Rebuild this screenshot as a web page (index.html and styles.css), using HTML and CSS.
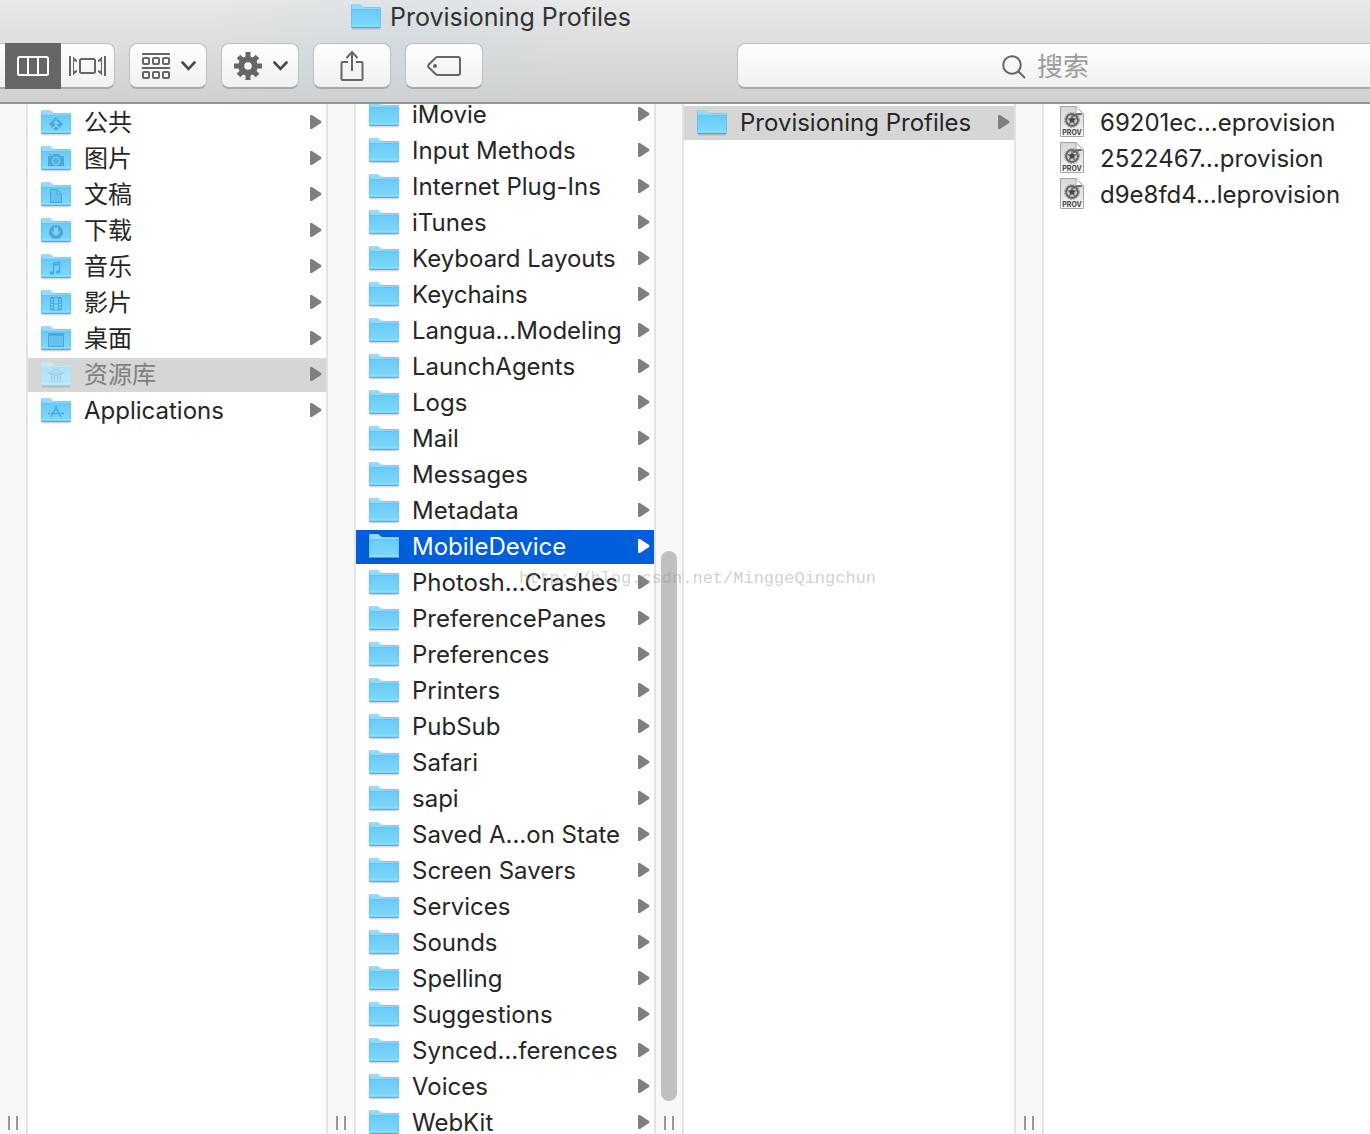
FILE: index.html
```html
<!DOCTYPE html>
<html lang="zh-CN">
<head>
  <meta charset="UTF-8" />
  <meta name="viewport" content="width=device-width, initial-scale=1.0" />
  <title>Provisioning Profiles</title>
  <link rel="stylesheet" href="styles.css">
</head>
<body>
  <svg class="sprite" width="0" height="0" aria-hidden="true">
    <defs>
      <linearGradient id="folderFill" x1="0" y1="0" x2="0" y2="1">
        <stop offset="0" stop-color="#68cbf8" />
        <stop offset="1" stop-color="#81d8fc" />
      </linearGradient>
      <linearGradient id="paperFill" x1="0" y1="0" x2="0" y2="1">
        <stop offset="0" stop-color="#d6d6d6" />
        <stop offset="1" stop-color="#f6f6f6" />
      </linearGradient>
    </defs>
    <symbol id="folder" viewBox="0 0 30 26">
      <path d="M1 24.5h28" stroke="#000" stroke-opacity=".15" stroke-width="2" />
      <path d="M0 1.2Q0 0 1.2 0H8.5Q9.5 0 10.2 .8L12 2.6Q12.6 3 13.5 3H29Q30 3 30 4V12H0Z" fill="#94dbfb" />
      <path d="M0 5H30V23Q30 24 29 24H1Q0 24 0 23Z" fill="url(#folderFill)" />
      <path d="M.5 1V23M29.5 4V23" stroke="#5fb9e4" stroke-opacity=".6" />
      <path d="M0 5.5H30M13 3.5H29.5" stroke="#5fbfea" stroke-opacity=".6" />
      <path d="M0 21.5H30" stroke="#a1e3fd" stroke-opacity=".5" />
      <path d="M.5 23.5H29.5" stroke="#56a9cf" />
    </symbol>
    <symbol id="prov" viewBox="0 0 24 31">
      <path d="M.5 .5H16L23.5 8V30.5H.5Z" fill="url(#paperFill)" stroke="#a5a5a5" />
      <path d="M16 .5V8H23.5Z" fill="#fff" stroke="#aaa" />
      <circle cx="12" cy="14" r="6" fill="#ccc" stroke="#666" stroke-width="2" />
      <circle cx="12" cy="14" r="7.5" fill="none" stroke="#888" stroke-dasharray="1.5 1.5" />
      <path d="M12 14V8.5M12 14L17.2 12.3M12 14L15.2 18.5M12 14L8.8 18.5M12 14L6.8 12.3" stroke="#777" stroke-width="1.5" />
      <circle cx="12" cy="14" r="2.5" fill="#444" />
      <path d="M13 10.5Q16 7.5 21.500 8" fill="none" stroke="#666" stroke-width="2" />
      <text x="12" y="28.5" text-anchor="middle" class="prov-text">PROV</text>
    </symbol>
    <symbol id="chevron" viewBox="0 0 15 10">
      <path d="M1.5 1.5L7.5 7.8L13.5 1.5" fill="none" stroke="#484848" stroke-width="2.6" stroke-linecap="round" />
    </symbol>
  </svg>

  <div class="window">
    <header class="toolbar">
      <h1 class="title"><svg class="icon"><use href="#folder" /></svg>Provisioning Profiles</h1>
      <div class="tools">
        <div class="segments">
          <button class="segment active" aria-label="分栏">
            <svg width="32" height="20" viewBox="0 0 32 20" fill="none" stroke="#fff" stroke-width="2"><rect x="1" y="1" width="30" height="18" rx="1.5" /><path d="M11 1V19M21 1V19" /></svg>
          </button>
          <button class="segment" aria-label="Cover Flow">
            <svg width="37" height="20" viewBox="0 0 37 20" fill="none" stroke="#666" stroke-width="2"><path d="M1 0V20M36 0V20" /><path d="M4.500 1V19M32.500 1V19" stroke-width="1" /><path d="M4 1L8 4V6L5 5V15L8 14V16L4 19ZM33 1L29 4V6L32 5V15L29 14V16L33 19Z" fill="#666" stroke="none" /><rect x="11" y="3" width="15" height="14" rx="1.5" /></svg>
          </button>
        </div>
        <button class="tool menu" aria-label="排列">
          <svg width="28" height="26" viewBox="0 0 28 26" fill="none" stroke="#666" stroke-width="2"><path d="M0 1H28M0 15H28" /><rect x="1" y="5" width="6" height="6" rx="1" /><rect x="11" y="5" width="6" height="6" rx="1" /><rect x="21" y="5" width="6" height="6" rx="1" /><rect x="1" y="19" width="6" height="6" rx="1" /><rect x="11" y="19" width="6" height="6" rx="1" /><rect x="21" y="19" width="6" height="6" rx="1" /></svg>
          <svg width="15" height="10"><use href="#chevron" /></svg>
        </button>
        <button class="tool menu" aria-label="操作">
          <svg width="28" height="28" viewBox="-14 -14 28 28"><g stroke="#666" stroke-width="5"><path d="M0-14V-7M0 14V7M-14 0H-7M14 0H7" /><path d="M-9.5-9.5L-5-5M9.5 9.5L5 5M-9.5 9.5L-5 5M9.5-9.5L5-5" /></g><circle r="6.8" fill="none" stroke="#666" stroke-width="6" /></svg>
          <svg width="15" height="10"><use href="#chevron" /></svg>
        </button>
        <button class="tool" aria-label="共享">
          <svg width="24" height="32" viewBox="0 0 24 32" fill="none" stroke="#666" stroke-width="2"><path d="M8 12H2.5Q1.5 12 1.5 13V29Q1.5 30 2.5 30H21.5Q22.5 30 22.5 29V13Q22.5 12 21.5 12H16M12 21V2M6.5 8L12 2L17.5 8" /></svg>
        </button>
        <button class="tool" aria-label="编辑标记">
          <svg width="34" height="20" viewBox="0 0 34 20"><path d="M10.5 1H31Q33 1 33 3V17Q33 19 31 19H10.5Q9.5 19 8.5 18L1.8 11.5Q.5 10 1.8 8.5L8.5 2Q9.5 1 10.5 1Z" fill="none" stroke="#666" stroke-width="2" /><circle cx="8" cy="10" r="2" fill="#666" /></svg>
        </button>
        <label class="search">
          <svg width="24" height="24" viewBox="0 0 24 24" fill="none" stroke="#666" stroke-width="2"><circle cx="10" cy="10" r="8.8" /><path d="M16 16L23 23" /></svg>
          <input type="text" placeholder="搜索" aria-label="搜索">
        </label>
      </div>
    </header>

    <main class="browser">
      <div class="divider first"><span class="grip"></span></div>

      <ul class="column">
        <li><a class="item dir" href="#"><svg class="icon" viewBox="0 0 30 26"><use href="#folder" /><path d="M15 7L22 14L15 21L8 14Z" fill="#4ba7da" /><path d="M14 10h2M12.5 13L15 12L18 13.5M15 12V15L12.5 18M15 15L17.5 18" fill="none" stroke="#7dd3fa" stroke-width="1.4" /></svg><span>公共</span></a></li>
        <li><a class="item dir" href="#"><svg class="icon" viewBox="0 0 30 26"><use href="#folder" /><path d="M7 10H11L12.5 8H17.5L19 10H23V20H7Z" fill="#4ba7da" /><path d="M8 8.5H10.5" stroke="#4ba7da" /><circle cx="15" cy="15" r="3.8" fill="#55b1e0" stroke="#83d6fb" /></svg><span>图片</span></a></li>
        <li><a class="item dir" href="#"><svg class="icon" viewBox="0 0 30 26"><use href="#folder" /><path d="M9.5 7.5H16L20.5 12V20.5H9.5ZM16 7.5V12H20.5" fill="#67c2ed" stroke="#4ba7da" /></svg><span>文稿</span></a></li>
        <li><a class="item dir" href="#"><svg class="icon" viewBox="0 0 30 26"><use href="#folder" /><circle cx="15" cy="14" r="7" fill="#4ba7da" /><path d="M13 9.5H17V13.5H20L15 18.5L10 13.5H13Z" fill="#7dd3fa" /></svg><span>下载</span></a></li>
        <li><a class="item dir" href="#"><svg class="icon" viewBox="0 0 30 26"><use href="#folder" /><path d="M12.5 18.5V9.5L18.5 8V17.5M12.5 11.5L18.5 10" fill="none" stroke="#4ba7da" stroke-width="1.4" /><ellipse cx="11" cy="19" rx="2.2" ry="1.7" fill="#4ba7da" /><ellipse cx="17" cy="18" rx="2.2" ry="1.7" fill="#4ba7da" /></svg><span>音乐</span></a></li>
        <li><a class="item dir" href="#"><svg class="icon" viewBox="0 0 30 26"><use href="#folder" /><path d="M9.5 7.5H20.5V20H9.5ZM12.5 7.5V20M17.5 7.5V20M12.5 14H17.5" fill="none" stroke="#4ba7da" /><path d="M11 8V20M19 8V20" stroke="#4ba7da" stroke-width="2" stroke-dasharray="1 1.5" /></svg><span>影片</span></a></li>
        <li><a class="item dir" href="#"><svg class="icon" viewBox="0 0 30 26"><use href="#folder" /><path d="M7.5 7.5H22.5V20.5H7.5Z" fill="#67c2ed" stroke="#4ba7da" /><path d="M7 8.5H23" stroke="#4ba7da" stroke-width="2.5" /></svg><span>桌面</span></a></li>
        <li><a class="item dir selected dimmed" href="#"><svg class="icon" viewBox="0 0 30 26"><use href="#folder" /><path d="M8 11L15 7L22 11ZM9 12.5H21M8 20H22" fill="none" stroke="#3f9fd3" stroke-width="1.2" /><path d="M10.5 13V19M13.5 13V19M16.5 13V19M19.5 13V19" stroke="#3f9fd3" stroke-width="1.6" /><path d="M0 0H10L13 3H30V24H0Z" fill="#eef6fa" fill-opacity=".55" /></svg><span>资源库</span></a></li>
        <li><a class="item dir" href="#"><svg class="icon" viewBox="0 0 30 26"><use href="#folder" /><path d="M14 8L20 19M16 8L10 19" stroke="#4ba7da" stroke-width="1.4" /><path d="M7 15.5H23" stroke="#4ba7da" stroke-width="1.4" stroke-dasharray="2 1 9 1 3" /></svg><span>Applications</span></a></li>
      </ul>

      <div class="divider"><span class="grip"></span></div>

      <ul class="column scrolled">
        <li><a class="item dir" href="#"><svg class="icon"><use href="#folder" /></svg><span>iMovie</span></a></li>
        <li><a class="item dir" href="#"><svg class="icon"><use href="#folder" /></svg><span>Input Methods</span></a></li>
        <li><a class="item dir" href="#"><svg class="icon"><use href="#folder" /></svg><span>Internet Plug-Ins</span></a></li>
        <li><a class="item dir" href="#"><svg class="icon"><use href="#folder" /></svg><span>iTunes</span></a></li>
        <li><a class="item dir" href="#"><svg class="icon"><use href="#folder" /></svg><span>Keyboard Layouts</span></a></li>
        <li><a class="item dir" href="#"><svg class="icon"><use href="#folder" /></svg><span>Keychains</span></a></li>
        <li><a class="item dir" href="#"><svg class="icon"><use href="#folder" /></svg><span>Langua…Modeling</span></a></li>
        <li><a class="item dir" href="#"><svg class="icon"><use href="#folder" /></svg><span>LaunchAgents</span></a></li>
        <li><a class="item dir" href="#"><svg class="icon"><use href="#folder" /></svg><span>Logs</span></a></li>
        <li><a class="item dir" href="#"><svg class="icon"><use href="#folder" /></svg><span>Mail</span></a></li>
        <li><a class="item dir" href="#"><svg class="icon"><use href="#folder" /></svg><span>Messages</span></a></li>
        <li><a class="item dir" href="#"><svg class="icon"><use href="#folder" /></svg><span>Metadata</span></a></li>
        <li><a class="item dir current" href="#"><svg class="icon"><use href="#folder" /></svg><span>MobileDevice</span></a></li>
        <li><a class="item dir" href="#"><svg class="icon"><use href="#folder" /></svg><span>Photosh…Crashes</span></a></li>
        <li><a class="item dir" href="#"><svg class="icon"><use href="#folder" /></svg><span>PreferencePanes</span></a></li>
        <li><a class="item dir" href="#"><svg class="icon"><use href="#folder" /></svg><span>Preferences</span></a></li>
        <li><a class="item dir" href="#"><svg class="icon"><use href="#folder" /></svg><span>Printers</span></a></li>
        <li><a class="item dir" href="#"><svg class="icon"><use href="#folder" /></svg><span>PubSub</span></a></li>
        <li><a class="item dir" href="#"><svg class="icon"><use href="#folder" /></svg><span>Safari</span></a></li>
        <li><a class="item dir" href="#"><svg class="icon"><use href="#folder" /></svg><span>sapi</span></a></li>
        <li><a class="item dir" href="#"><svg class="icon"><use href="#folder" /></svg><span>Saved A…on State</span></a></li>
        <li><a class="item dir" href="#"><svg class="icon"><use href="#folder" /></svg><span>Screen Savers</span></a></li>
        <li><a class="item dir" href="#"><svg class="icon"><use href="#folder" /></svg><span>Services</span></a></li>
        <li><a class="item dir" href="#"><svg class="icon"><use href="#folder" /></svg><span>Sounds</span></a></li>
        <li><a class="item dir" href="#"><svg class="icon"><use href="#folder" /></svg><span>Spelling</span></a></li>
        <li><a class="item dir" href="#"><svg class="icon"><use href="#folder" /></svg><span>Suggestions</span></a></li>
        <li><a class="item dir" href="#"><svg class="icon"><use href="#folder" /></svg><span>Synced…ferences</span></a></li>
        <li><a class="item dir" href="#"><svg class="icon"><use href="#folder" /></svg><span>Voices</span></a></li>
        <li><a class="item dir" href="#"><svg class="icon"><use href="#folder" /></svg><span>WebKit</span></a></li>
      </ul>

      <div class="divider">
        <div class="track"><div class="thumb"></div></div>
        <span class="grip"></span>
      </div>

      <ul class="column">
        <li><a class="item dir selected" href="#"><svg class="icon"><use href="#folder" /></svg><span>Provisioning Profiles</span></a></li>
      </ul>

      <div class="divider"><span class="grip"></span></div>

      <ul class="column">
        <li><a class="item file" href="#"><svg class="doc"><use href="#prov" /></svg><span>69201ec…eprovision</span></a></li>
        <li><a class="item file" href="#"><svg class="doc"><use href="#prov" /></svg><span>2522467…provision</span></a></li>
        <li><a class="item file" href="#"><svg class="doc"><use href="#prov" /></svg><span>d9e8fd4…leprovision</span></a></li>
      </ul>
    </main>

    <p class="watermark">http://blog.csdn.net/MinggeQingchun</p>
  </div>
</body>
</html>
```
FILE: styles.css
```css
:root {
  --text: #262626;
  --arrow: #7f7f7f;
  --selected: #d6d6d6;
  --current: #005fd8;
  --line: #e3e3e3;
}

* {
  box-sizing: border-box;
  margin: 0;
  padding: 0;
}

body {
  background: #fff;
  color: var(--text);
  font-family: Inter, "Noto Sans CJK SC", sans-serif;
  font-size: 24px;
}

button, input {
  font: inherit;
}

.sprite {
  position: absolute;
}

.window {
  position: relative;
  display: flex;
  flex-direction: column;
  height: 100vh;
  overflow: hidden;
}

/* toolbar */
.toolbar {
  flex: none;
  height: 104px;
  border-bottom: 2px solid #969696;
  background:
    radial-gradient(ellipse 210px 130px at 400px 50px, rgba(190, 212, 222, 0.35), transparent),
    linear-gradient(#e9e9e9, #d0d0d0);
}

.title {
  display: flex;
  align-items: center;
  gap: 9px;
  height: 34px;
  padding-left: 351px;
  font-size: 25px;
  font-weight: 400;
  color: #333;
  white-space: nowrap;
}

.tools {
  display: flex;
  gap: 14px;
  padding-top: 9px;
  overflow: hidden;
  height: 60px;
}

.segments,
.tool,
.search {
  height: 46px;
  border: 1px solid #bfbfbf;
  border-bottom: 2px solid #a9a9a9;
  border-radius: 8px;
  background: linear-gradient(#fff, #f0f0f0);
}

.segments {
  display: flex;
  flex: none;
  width: 115px;
  padding-left: 5px;
  border-left: none;
  border-radius: 0 8px 8px 0;
}

.segment {
  display: flex;
  flex: 1;
  align-items: center;
  justify-content: center;
  border: none;
  background: none;
}

.segment.active {
  flex: none;
  width: 56px;
  height: 46px;
  margin-top: -1px;
  background: #666;
}

.tool {
  display: flex;
  flex: none;
  align-items: center;
  justify-content: center;
  gap: 11px;
  width: 78px;
}

.tool.menu {
  padding-left: 2px;
}

.search {
  display: flex;
  flex: 1;
  align-items: center;
  gap: 11px;
  margin: 0 -12px 0 240px;
  padding: 2px 0 0 264px;
}

.search svg {
  flex: none;
}

.search input {
  flex: 1;
  min-width: 0;
  border: none;
  outline: none;
  background: none;
  font-size: 26px;
  line-height: 32px;
}

.search input::placeholder {
  color: #9c9c9c;
}

/* columns */
.browser {
  display: grid;
  flex: 1;
  grid-template-columns:
    28px minmax(0, 298fr)
    30px minmax(0, 298fr)
    30px minmax(0, 330fr)
    30px minmax(0, 326fr);
  min-height: 0;
}

.column {
  display: flex;
  flex-direction: column;
  gap: 2px;
  padding-top: 2px;
  overflow: hidden;
  list-style: none;
}

.column.scrolled {
  padding-top: 0;
}

.column.scrolled li:first-child {
  margin-top: -6px;
}

.item {
  display: flex;
  align-items: center;
  gap: 13px;
  height: 34px;
  padding: 0 4px 0 13px;
  color: inherit;
  line-height: 34px;
  text-decoration: none;
  white-space: nowrap;
}

.item span {
  flex: 1;
}

.dir::after {
  content: "";
  width: 12px;
  height: 14px;
  margin-bottom: 2px;
  background: var(--arrow);
  clip-path: path("M0 1Q0 0 1 0L2 0L11 6Q12 7 11 8L2 14L1 14Q0 14 0 13Z");
}

.icon {
  flex: none;
  width: 30px;
  height: 26px;
}

.doc {
  flex: none;
  align-self: flex-start;
  width: 24px;
  height: 31px;
}

.prov-text {
  font-size: 7px;
  font-weight: 700;
  fill: #444;
}

.file {
  gap: 16px;
  padding-left: 16px;
}

.selected {
  background: var(--selected);
}

.dimmed span {
  color: #808080;
}

.current {
  background: var(--current);
  color: #fff;
}

.current::after {
  background: #fff;
}

.divider {
  display: flex;
  flex-direction: column;
  align-items: center;
  justify-content: flex-end;
  gap: 15px;
  min-height: 0;
  padding-bottom: 4px;
  border: solid var(--line);
  border-width: 0 2px;
  background: #f8f8f8;
}

.divider.first {
  border-left: none;
}

.grip {
  width: 10px;
  height: 14px;
  border: solid #999;
  border-width: 0 2px;
}

.track {
  display: flex;
  flex: 1;
  flex-direction: column;
}

.track::before {
  content: "";
  flex: 447;
}

.thumb {
  flex: 550;
  width: 16px;
  border-radius: 8px;
  background: #c0c0c0;
}

.watermark {
  position: absolute;
  top: 568px;
  left: 519px;
  color: rgba(150, 150, 130, 0.45);
  font-family: "Liberation Mono", monospace;
  font-size: 17px;
  line-height: 22px;
  pointer-events: none;
}
```
